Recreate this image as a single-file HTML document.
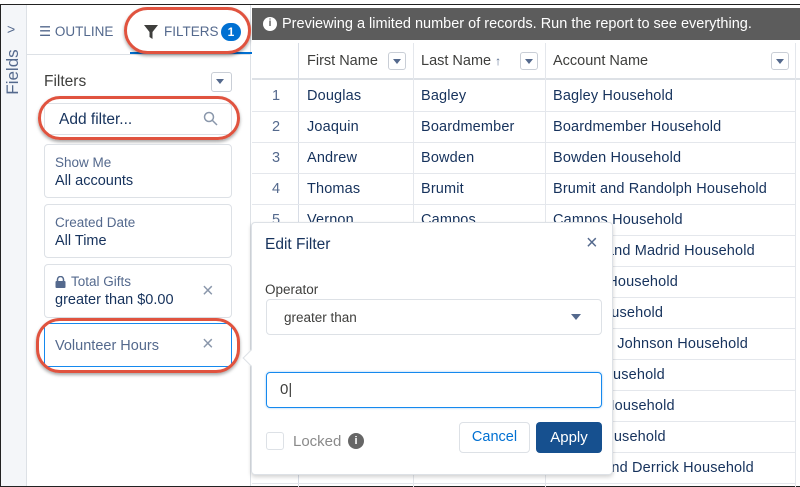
<!DOCTYPE html>
<html><head><style>
*{box-sizing:border-box;margin:0;padding:0}
body{width:800px;height:487px;background:#fff;font-family:"Liberation Sans",sans-serif;position:relative;overflow:hidden;color:#16325c}
.a{position:absolute}
.frame{left:0;top:4px;width:800px;height:483px;border:1.5px solid #222;border-right:none}
.strip{left:1px;top:5px;width:26px;height:481px;background:#f4f6f9;border-right:1px solid #dde1e6}
.card{position:absolute;left:44px;width:188px;border:1px solid #dde1e6;border-radius:4px;background:#fff}
.lbl{font-size:13.5px;color:#54698d}
.val{font-size:14.5px;color:#16325c}
.oval{position:absolute;border:3px solid #e0533f;border-radius:24px;box-shadow:0 2px 3px rgba(0,0,0,.35)}
.row{position:absolute;left:252px;width:544px;height:31px;border-bottom:1px solid #e4e7ec;font-size:14.5px;letter-spacing:0.15px}
.row span{position:absolute;top:7px}
.vl{position:absolute;top:43px;width:1px;height:444px;background:#e4e7ec}
.dd{position:absolute;width:18px;height:18px;border:1px solid #c9ced6;border-radius:3px;background:#fff}
.dd:after{content:"";position:absolute;left:4px;top:6px;border-left:4px solid transparent;border-right:4px solid transparent;border-top:5px solid #54698d}
</style></head><body>
<div class="a frame"></div>
<div class="a strip"></div>
<div class="a" style="left:7px;top:21px;font-size:14px;color:#54698d">&gt;</div>
<div class="a" style="left:-12px;top:62px;transform:rotate(-90deg);font-size:17px;color:#54698d;width:50px;text-align:center">Fields</div>
<div class="a" style="left:27px;top:5px;width:224px;height:481px;background:#fff;border-right:1px solid #dde1e6"></div>
<div class="a" style="left:27px;top:54px;width:224px;height:1px;background:#dde1e6"></div>
<div class="a" style="left:130px;top:52px;width:122px;height:2px;background:#0070d2"></div>
<div class="a" style="left:39px;top:24px;font-size:13.5px;color:#54698d">☰ OUTLINE</div>
<svg class="a" style="left:144px;top:25px" width="14" height="14" viewBox="0 0 14 14"><path d="M0 0H14L8.5 7V14L5.5 12V7Z" fill="#3e3e3c"/></svg>
<div class="a" style="left:164px;top:24px;font-size:13.5px;color:#54698d">FILTERS</div>
<div class="a" style="left:221px;top:23px;width:20px;height:18px;border-radius:9px;background:#0070d2;color:#fff;font-size:12px;font-weight:bold;text-align:center;line-height:18px">1</div>
<div class="oval" style="left:124px;top:7px;width:127px;height:47px"></div>
<div class="a" style="left:44px;top:73px;font-size:15.5px;color:#3e3e3c">Filters</div>
<div class="dd" style="left:211px;top:72px;width:21px;height:20px"></div>
<div class="card" style="top:103px;height:32px"></div>
<div class="a" style="left:59px;top:111px;font-size:15.5px;color:#16325c">Add filter...</div>
<svg class="a" style="left:203px;top:111px" width="15" height="15"><circle cx="6" cy="6" r="4.5" stroke="#8a97ab" stroke-width="1.5" fill="none"/><path d="M9.5 9.5L14 14" stroke="#8a97ab" stroke-width="1.5"/></svg>
<div class="oval" style="left:38px;top:96px;width:202px;height:44px"></div>
<div class="card" style="top:144px;height:54px"><div class="lbl" style="position:absolute;left:10px;top:10px">Show Me</div><div class="val" style="position:absolute;left:10px;top:28px">All accounts</div></div>
<div class="card" style="top:204px;height:54px"><div class="lbl" style="position:absolute;left:10px;top:10px">Created Date</div><div class="val" style="position:absolute;left:10px;top:28px">All Time</div></div>
<div class="card" style="top:264px;height:54px">
<svg style="position:absolute;left:10px;top:11px" width="11" height="12" viewBox="0 0 11 12"><path d="M2.5 5V3.5a3 3 0 0 1 6 0V5" stroke="#54698d" stroke-width="1.5" fill="none"/><rect x="0.5" y="5" width="10" height="7" rx="1" fill="#54698d"/></svg>
<div class="lbl" style="position:absolute;left:26px;top:9px">Total Gifts</div><div class="val" style="position:absolute;left:10px;top:27px">greater than $0.00</div><div style="position:absolute;left:157px;top:15px;font-size:20px;color:#8a97ab">×</div></div>
<div class="card" style="top:323px;height:44px;border-color:#1589ee"><div class="lbl" style="position:absolute;left:10px;top:14px;font-size:14.5px">Volunteer Hours</div><div style="position:absolute;left:157px;top:9px;font-size:20px;color:#8a97ab">×</div></div>
<div class="oval" style="left:36px;top:318px;width:204px;height:55px"></div>
<div class="a" style="left:252px;top:8px;width:548px;height:32px;background:#5c5c5c;color:#fff;font-size:14.5px;line-height:32px;padding-left:30px">Previewing a limited number of records. Run the report to see everything.</div>
<div class="a" style="left:263px;top:17px;width:14px;height:14px;border-radius:7px;background:#fff;color:#5c5c5c;font-size:10px;font-weight:bold;text-align:center;line-height:14px">i</div>
<div class="a" style="left:252px;top:40px;width:548px;height:40px;background:#fff;border-bottom:2px solid #dde1e6"></div>
<div class="vl" style="left:298px;background:#d8dde6"></div><div class="vl" style="left:413px"></div><div class="vl" style="left:545px"></div><div class="vl" style="left:795px"></div>
<div class="a" style="left:307px;top:53px;font-size:14.5px;color:#3e3e3c">First Name</div><div class="dd" style="left:388px;top:52px"></div>
<div class="a" style="left:421px;top:53px;font-size:14.5px;color:#3e3e3c">Last Name <span style="font-size:12px;color:#54698d">↑</span></div><div class="dd" style="left:520px;top:52px"></div>
<div class="a" style="left:553px;top:53px;font-size:14.5px;color:#3e3e3c">Account Name</div><div class="dd" style="left:771px;top:52px"></div>
<div class="row" style="top:81px"><span style="left:20px;color:#54698d">1</span><span style="left:55px">Douglas</span><span style="left:169px">Bagley</span><span style="left:301px">Bagley Household</span></div>
<div class="row" style="top:112px"><span style="left:20px;color:#54698d">2</span><span style="left:55px">Joaquin</span><span style="left:169px">Boardmember</span><span style="left:301px">Boardmember Household</span></div>
<div class="row" style="top:143px"><span style="left:20px;color:#54698d">3</span><span style="left:55px">Andrew</span><span style="left:169px">Bowden</span><span style="left:301px">Bowden Household</span></div>
<div class="row" style="top:174px"><span style="left:20px;color:#54698d">4</span><span style="left:55px">Thomas</span><span style="left:169px">Brumit</span><span style="left:301px">Brumit and Randolph Household</span></div>
<div class="row" style="top:205px"><span style="left:20px;color:#54698d">5</span><span style="left:55px">Vernon</span><span style="left:169px">Campos</span><span style="left:301px">Campos Household</span></div>
<div class="row" style="top:236px"><span style="left:301px">Castillo and Madrid Household</span></div>
<div class="row" style="top:267px"><span style="left:301px">Chavez Household</span></div>
<div class="row" style="top:298px"><span style="left:301px">Chen Household</span></div>
<div class="row" style="top:329px"><span style="left:301px">Cruz and Johnson Household</span></div>
<div class="row" style="top:360px"><span style="left:301px">Davis Household</span></div>
<div class="row" style="top:391px"><span style="left:301px">Dayton Household</span></div>
<div class="row" style="top:422px"><span style="left:301px">Delos Household</span></div>
<div class="row" style="top:453px"><span style="left:301px">Deloyd and Derrick Household</span></div>
<div class="a" style="left:251px;top:222px;width:362px;height:253px;background:#fff;border:1px solid #dde1e6;border-radius:4px;box-shadow:0 2px 4px rgba(0,0,0,.18)"></div>
<div class="a" style="left:245px;top:352px;width:12px;height:12px;background:#fff;border-left:1px solid #dde1e6;border-bottom:1px solid #dde1e6;transform:rotate(45deg)"></div>
<div class="a" style="left:265px;top:236px;font-size:15.5px">Edit Filter</div>
<div class="a" style="left:586px;top:232px;font-size:20px;color:#54698d">×</div>
<div class="a" style="left:265px;top:282px;font-size:13.5px;color:#3e3e3c">Operator</div>
<div class="a" style="left:266px;top:299px;width:336px;height:36px;border:1px solid #dde1e6;border-radius:4px"></div>
<div class="a" style="left:284px;top:310px;font-size:13.5px;color:#3e3e3c">greater than</div>
<div class="a" style="left:571px;top:314px;border-left:5px solid transparent;border-right:5px solid transparent;border-top:6px solid #54698d"></div>
<div class="a" style="left:266px;top:372px;width:336px;height:36px;border:1px solid #1589ee;border-radius:4px;box-shadow:0 0 2px #9cc7f0"></div>
<div class="a" style="left:280px;top:381px;font-size:15px;color:#3e3e3c">0<span style="font-weight:100">|</span></div>
<div class="a" style="left:266px;top:432px;width:18px;height:18px;border:1px solid #dde1e6;border-radius:3px"></div>
<div class="a" style="left:293px;top:433px;font-size:15px;color:#8a8a8a">Locked</div>
<div class="a" style="left:348px;top:433px;width:16px;height:16px;border-radius:8px;background:#666;color:#fff;font-size:11px;font-weight:bold;text-align:center;line-height:16px">i</div>
<div class="a" style="left:459px;top:422px;width:71px;height:31px;border:1px solid #dde1e6;border-radius:4px;font-size:14.5px;color:#0070d2;text-align:center;line-height:29px">Cancel</div>
<div class="a" style="left:536px;top:422px;width:66px;height:31px;background:#16508f;border-radius:4px;font-size:15px;color:#fff;text-align:center;line-height:31px">Apply</div>
</body></html>
